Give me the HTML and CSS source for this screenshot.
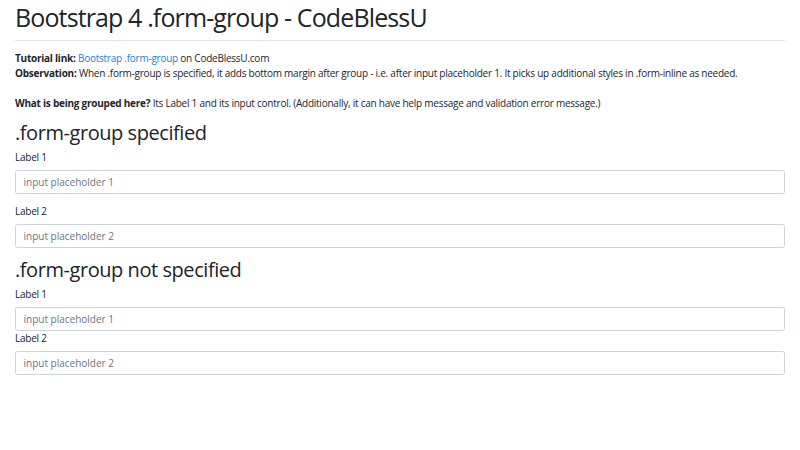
FILE: index.html
```html
<!DOCTYPE html>
<html lang="en">
<head>
<meta charset="utf-8">
<title>Bootstrap 4 .form-group - CodeBlessU</title>
<link rel="stylesheet" href="styles.css">
</head>
<body>
<div class="container">
  <h1 class="title">Bootstrap 4 .form-group - CodeBlessU</h1>
  <hr class="rule">
  <p class="intro"><b>Tutorial link:</b> <a class="link" href="#">Bootstrap .form-group</a> on CodeBlessU.com<br><b>Observation:</b> When .form-group is specified, it adds bottom margin after group - i.e. after input placeholder 1. It picks up additional styles in .form-inline as needed.<br><br><b>What is being grouped here?</b> Its Label 1 and its input control. (Additionally, it can have help message and validation error message.)</p>

  <h2 class="section">.form-group specified</h2>
  <form class="form">
    <div class="form-group">
      <label class="label">Label 1</label>
      <input class="control" type="text" placeholder="input placeholder 1">
    </div>
    <div class="form-group">
      <label class="label">Label 2</label>
      <input class="control" type="text" placeholder="input placeholder 2">
    </div>
  </form>

  <h2 class="section">.form-group not specified</h2>
  <form class="form">
    <label class="label">Label 1</label>
    <input class="control" type="text" placeholder="input placeholder 1">
    <label class="label">Label 2</label>
    <input class="control" type="text" placeholder="input placeholder 2">
  </form>
</div>
</body>
</html>
```

FILE: styles.css
```css
* { box-sizing: border-box; }
html, body { margin: 0; padding: 0; background: #fff; }
body {
  font-family: "Open Sans", "Noto Sans", "Liberation Sans", sans-serif;
  font-size: 10px;
  line-height: 1.5;
  letter-spacing: -0.024em;
  color: #212529;
}
.container { padding: 0 15px; }
.title {
  margin: 0;
  font-size: 25px;
  font-weight: 400;
  line-height: 34px;
  letter-spacing: -0.035em;
}
.rule {
  margin: 6px 0 10px;
  border: 0;
  border-top: 1px solid rgba(0,0,0,0.1);
}
.intro { margin: 0 0 10px; }
.intro b { font-weight: 700; }
.link { color: #1a85d6; text-decoration: none; }
.section {
  margin: 0 0 5px;
  font-size: 20px;
  font-weight: 400;
  line-height: 1.2;
  letter-spacing: -0.022em;
}
.form { margin: 0; }
.form-group { margin-bottom: 10px; }
.label { display: inline-block; margin-bottom: 5px; }
.control {
  display: block;
  width: 100%;
  height: 24px;
  padding: 3px 7.5px;
  font: inherit;
  font-size: 10px;
  line-height: 1.5;
  color: #495057;
  background: #fff;
  border: 1px solid #ced4da;
  border-radius: 2.5px;
}
.control::placeholder { color: #6c757d; opacity: 1; }
```
